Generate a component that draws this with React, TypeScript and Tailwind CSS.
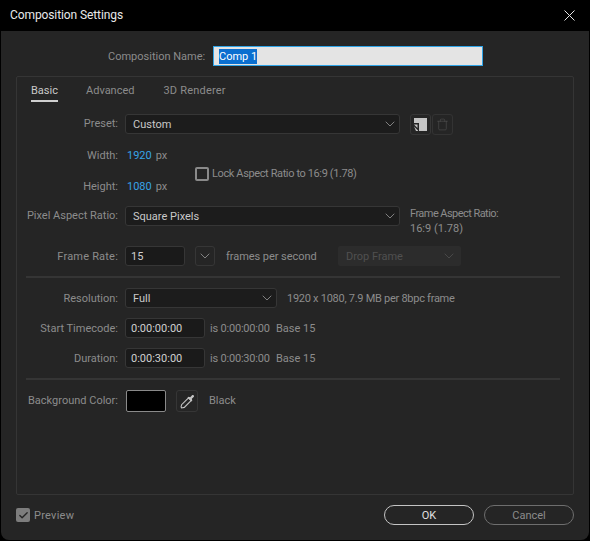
import { ChevronDown, Check, Trash } from "lucide-react";

const font = "font-['Roboto',sans-serif]";

function Label({ children }: { children: React.ReactNode }) {
  return <div className="w-[101px] shrink-0 text-right text-[#8c8c8c] mr-[7px] whitespace-nowrap">{children}</div>;
}

function Select({ value, className }: { value: string; className: string }) {
  return (
    <div className={`h-[20px] flex items-center justify-between pl-[7px] pr-px bg-[#1c1c1c] border border-[#363636] rounded-[3px] text-[#c9c9c9] ${className}`}>
      <span>{value}</span>
      <ChevronDown size={16} strokeWidth={1.2} className="text-[#9a9a9a]" />
    </div>
  );
}

function Field({ value, className }: { value: string; className: string }) {
  return (
    <div className={`h-[20px] flex items-center pl-[5px] bg-[#1a1a1a] border border-[#363636] rounded-[3px] text-[#d0d0d0] ${className}`}>
      {value}
    </div>
  );
}

function Separator() {
  return <div className="h-[2px] mt-[10px] ml-[9px] mr-[13px] bg-[#353535]" />;
}

export default function App() {
  return (
    <div className={`w-[590px] h-[541px] bg-black flex flex-col text-[11px] leading-[15px] ${font}`}>
      {/* Title bar */}
      <div className="h-[31px] shrink-0 flex items-center justify-between pl-[10px] pr-[15px] text-[#e8e8e8] text-[12px] tracking-[-0.1px]">
        <span>Composition Settings</span>
        <svg width="11" height="11" viewBox="0 0 11 11" stroke="#e6e6e6" strokeWidth="1">
          <path d="M0.5 0.5L10.5 10.5M10.5 0.5L0.5 10.5" />
        </svg>
      </div>

      <div className="flex-1 mx-px mb-px bg-[#252525] rounded-b-[8px] px-[15px] flex flex-col">
        {/* Composition name */}
        <div className="mt-[15px] h-[20px] flex items-center">
          <div className="ml-[92px] w-[97px] text-right text-[#8c8c8c] whitespace-nowrap">Composition Name:</div>
          <div className="ml-[8px] w-[270px] h-[20px] flex items-center pl-[5px] bg-[#e4e4e4] border border-[#2fa4e7] text-[#222]">
            <span className="bg-[#0a6fd0] text-white">Comp 1</span>
          </div>
        </div>

        {/* Settings group */}
        <div className="mt-[10px] h-[419px] border border-[#353535] rounded-[2px] flex flex-col">
          <div className="h-[25px] flex pl-[14px] text-[#8c8c8c]">
            <div className="w-[27px] pt-[4px] border-b-2 border-[#d0d0d0] text-[#c9c9c9] flex justify-center items-center">Basic</div>
            <div className="ml-[28px] pt-[4px] border-b-2 border-transparent flex items-center">Advanced</div>
            <div className="ml-[29px] pt-[4px] border-b-2 border-transparent flex items-center tracking-[0.2px]">3D Renderer</div>
          </div>

          <div className="mt-[12px] h-[20px] flex items-start">
            <Label><span className="leading-[20px]">Preset:</span></Label>
            <Select value="Custom" className="w-[275px]" />
            <div className="ml-[10px] w-[21px] h-[21px] border border-[#363636] rounded-[3px] flex items-center justify-center">
              <svg width="13" height="13" viewBox="0 0 13 13">
                <path d="M0 0H13V13H5V5H0Z" fill="#c4c4c4" />
                <path d="M0 6.5H3.5V10ZM0 8.5L4 12.5V13H2Z" fill="#c4c4c4" />
              </svg>
            </div>
            <div className="ml-px w-[21px] h-[21px] border border-[#333] rounded-[3px] flex items-center justify-center">
              <Trash size={13} strokeWidth={1} className="text-[#555]" />
            </div>
          </div>

          <div className="mt-[11px] flex items-start">
            <div className="w-[178px] shrink-0">
              <div className="h-[20px] flex items-center">
                <Label>Width:</Label>
                <span className="ml-[2px] text-[#37a3e6]">1920</span>
                <span className="ml-[4px] text-[#8c8c8c]">px</span>
              </div>
              <div className="mt-[11px] h-[20px] flex items-center">
                <Label>Height:</Label>
                <span className="ml-[2px] text-[#37a3e6]">1080</span>
                <span className="ml-[4px] text-[#8c8c8c]">px</span>
              </div>
            </div>
            <div className="mt-[21px] flex items-center text-[#8c8c8c]">
              <div className="w-[14px] h-[14px] border-2 border-[#8a8a8a] rounded-[2px] mr-[3px]" />
              <span className="tracking-[-0.38px]">Lock Aspect Ratio to 16:9 (1.78)</span>
            </div>
          </div>

          <div className="mt-[10px] h-[20px] flex items-start">
            <Label><span className="leading-[20px]">Pixel Aspect Ratio:</span></Label>
            <Select value="Square Pixels" className="w-[275px]" />
            <div className="ml-[10px] text-[#8c8c8c]">
              <div className="tracking-[-0.55px]">Frame Aspect Ratio:</div>
              <div>16:9 (1.78)</div>
            </div>
          </div>

          <div className="mt-[20px] h-[20px] flex items-center">
            <Label><span className="tracking-[0.2px]">Frame Rate:</span></Label>
            <Field value="15" className="w-[60px]" />
            <div className="ml-[10px] w-[20px] h-[20px] border border-[#363636] rounded-[3px] flex items-center justify-center">
              <ChevronDown size={16} strokeWidth={1.2} className="text-[#9a9a9a]" />
            </div>
            <span className="ml-[11px] w-[112px] text-[#8c8c8c] tracking-[-0.05px]">frames per second</span>
            <div className="w-[123px] h-[20px] bg-[#2c2c2c] rounded-[2px] flex items-center justify-between pl-[8px] pr-[4px] text-[#505050]">
              <span>Drop Frame</span>
              <ChevronDown size={16} strokeWidth={1.2} />
            </div>
          </div>

          <Separator />

          <div className="mt-[10px] h-[20px] flex items-center">
            <Label>Resolution:</Label>
            <Select value="Full" className="w-[152px]" />
            <span className="ml-[10px] text-[#8c8c8c] tracking-[-0.27px]">1920 x 1080, 7.9 MB per 8bpc frame</span>
          </div>

          <div className="mt-[10px] h-[20px] flex items-center">
            <Label>Start Timecode:</Label>
            <Field value="0:00:00:00" className="w-[80px]" />
            <span className="ml-[5px] w-[66px] text-[#8c8c8c] tracking-[-0.2px]">is 0:00:00:00</span>
            <span className="text-[#8c8c8c]">Base 15</span>
          </div>

          <div className="mt-[10px] h-[20px] flex items-center">
            <Label>Duration:</Label>
            <Field value="0:00:30:00" className="w-[80px]" />
            <span className="ml-[5px] w-[66px] text-[#8c8c8c] tracking-[-0.2px]">is 0:00:30:00</span>
            <span className="text-[#8c8c8c]">Base 15</span>
          </div>

          <Separator />

          <div className="mt-[10px] h-[22px] flex items-center">
            <Label><span className="block pb-[2px]">Background Color:</span></Label>
            <div className="ml-px w-[40px] h-[22px] bg-black border border-[#8a8a8a] rounded-[2px]" />
            <div className="ml-[10px] w-[22px] h-[22px] border border-[#363636] rounded-[3px] flex items-center justify-center">
              <svg width="15" height="15" viewBox="0 0 14 14" fill="none">
                <path d="M8 3.5L10.5 6L4 12.5L1.5 13L1 12L1.5 10Z" stroke="#c4c4c4" strokeWidth="1" />
                <path d="M7 3.5L10.5 7L11.5 6L11 4.5L13 2.5C13.5 1.5 12.5 .5 11.5 1L9.5 3L8 2.5Z" fill="#c4c4c4" />
              </svg>
            </div>
            <span className="ml-[11px] pb-[2px] text-[#8c8c8c]">Black</span>
          </div>
        </div>

        {/* Footer */}
        <div className="mt-[10px] h-[20px] flex items-center">
          <div className="w-[14px] h-[14px] bg-[#7d7d7d] rounded-[2px] flex items-center justify-center">
            <Check size={11} strokeWidth={3} className="text-[#252525]" />
          </div>
          <span className="ml-[4px] text-[#8c8c8c] tracking-[0.25px]">Preview</span>
          <button className="ml-auto w-[90px] h-[20px] rounded-full border border-[#c4c4c4] text-[#e0e0e0]">OK</button>
          <button className="ml-[10px] w-[90px] h-[20px] rounded-full border border-[#6e6e6e] text-[#8c8c8c]">Cancel</button>
        </div>
      </div>
    </div>
  );
}
